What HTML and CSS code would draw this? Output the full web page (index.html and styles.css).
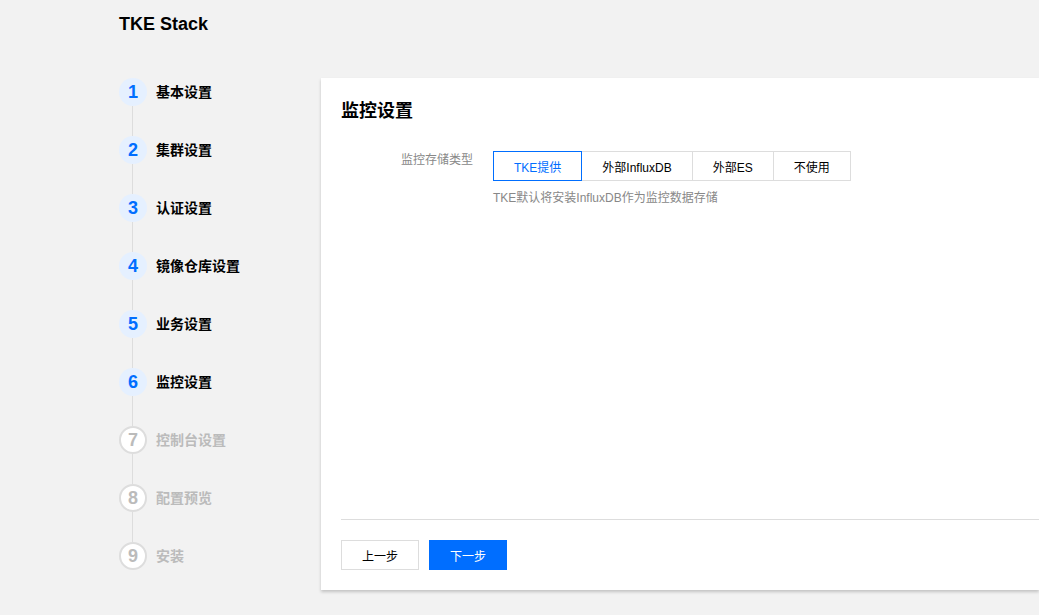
FILE: index.html
```html
<!DOCTYPE html>
<html lang="zh-CN">
<head>
<meta charset="utf-8">
<title>TKE Stack</title>
<link rel="stylesheet" href="styles.css">
</head>
<body>
<div class="page">
  <header class="header"><h1 class="brand">TKE Stack</h1></header>
  <div class="main">
    <ol class="steps">
      <li class="step done"><span class="num">1</span><span class="label">基本设置</span></li>
      <li class="step done"><span class="num">2</span><span class="label">集群设置</span></li>
      <li class="step done"><span class="num">3</span><span class="label">认证设置</span></li>
      <li class="step done"><span class="num">4</span><span class="label">镜像仓库设置</span></li>
      <li class="step done"><span class="num">5</span><span class="label">业务设置</span></li>
      <li class="step done"><span class="num">6</span><span class="label">监控设置</span></li>
      <li class="step todo"><span class="num">7</span><span class="label">控制台设置</span></li>
      <li class="step todo"><span class="num">8</span><span class="label">配置预览</span></li>
      <li class="step todo last"><span class="num">9</span><span class="label">安装</span></li>
    </ol>
    <section class="card">
      <div class="card-body">
        <h2 class="card-title">监控设置</h2>
        <div class="form-row">
          <div class="form-label">监控存储类型</div>
          <div class="form-control">
            <div class="segment">
              <button class="seg-btn active">TKE提供</button>
              <button class="seg-btn">外部InfluxDB</button>
              <button class="seg-btn">外部ES</button>
              <button class="seg-btn">不使用</button>
            </div>
            <p class="help">TKE默认将安装InfluxDB作为监控数据存储</p>
          </div>
        </div>
      </div>
      <div class="card-footer">
        <button class="btn">上一步</button>
        <button class="btn primary">下一步</button>
      </div>
    </section>
  </div>
</div>
</body>
</html>
```
FILE: styles.css
```css
* { box-sizing: border-box; }
html, body {
  margin: 0;
  padding: 0;
  background: #f2f2f2;
  overflow: hidden;
}
body {
  font-family: "Liberation Sans", Arial, "Noto Sans CJK SC", sans-serif;
  color: #000;
  width: 1039px;
  height: 615px;
}
.page {
  padding-left: 119px;
}
.header {
  height: 78px;
  padding-top: 12px;
}
.brand {
  margin: 0;
  font-size: 18px;
  line-height: 24px;
  font-weight: bold;
}
.main {
  display: flex;
  align-items: flex-start;
}
.steps {
  list-style: none;
  margin: 0;
  padding: 0;
  width: 202px;
  flex: none;
}
.step {
  position: relative;
  display: flex;
  height: 58px;
  align-items: flex-start;
}
.step::after {
  content: "";
  position: absolute;
  left: 13px;
  top: 28px;
  width: 1px;
  height: 30px;
  background: #ddd;
}
.step.last::after { display: none; }
.num {
  width: 28px;
  height: 28px;
  border-radius: 50%;
  display: flex;
  align-items: center;
  justify-content: center;
  font-size: 18px;
  font-weight: bold;
  flex: none;
}
.done .num {
  background: #e5f0ff;
  color: #006eff;
}
.todo .num {
  background: #fff;
  border: 2px solid #ddd;
  color: #bbb;
}
.label {
  margin-left: 9px;
  font-size: 14px;
  line-height: 28px;
  font-weight: 600;
}
.todo .label { color: #bbb; }
.card {
  flex: 1;
  min-width: 0;
  height: 512px;
  background: #fff;
  box-shadow: 0 2px 3px rgba(0,0,0,0.2);
  display: flex;
  flex-direction: column;
  padding: 0 0 20px 20px;
}
.card-body {
  flex: 1;
  padding-top: 19px;
}
.card-title {
  margin: 0;
  font-size: 18px;
  line-height: 28px;
  font-weight: bold;
}
.form-row {
  display: flex;
  margin-top: 26px;
}
.form-label {
  width: 132px;
  text-align: right;
  font-size: 12px;
  color: #888;
  line-height: 18px;
  flex: none;
}
.form-control {
  margin-left: 20px;
}
.segment {
  display: flex;
}
.seg-btn {
  height: 30px;
  padding: 0 20px;
  border: 1px solid #ddd;
  margin-left: -1px;
  background: #fff;
  font-family: inherit;
  font-size: 12px;
  color: #000;
  position: relative;
}
.seg-btn:first-child { margin-left: 0; }
.seg-btn.active {
  border-color: #006eff;
  color: #006eff;
  z-index: 1;
}
.help {
  margin: 8px 0 0;
  font-size: 12px;
  line-height: 18px;
  color: #888;
}
.card-footer {
  border-top: 1px solid #ddd;
  padding-top: 20px;
  display: flex;
  gap: 10px;
}
.btn {
  width: 78px;
  height: 30px;
  border: 1px solid #ddd;
  background: #fff;
  font-family: inherit;
  font-size: 12px;
  color: #000;
}
.btn.primary {
  background: #006eff;
  border-color: #006eff;
  color: #fff;
}
```
